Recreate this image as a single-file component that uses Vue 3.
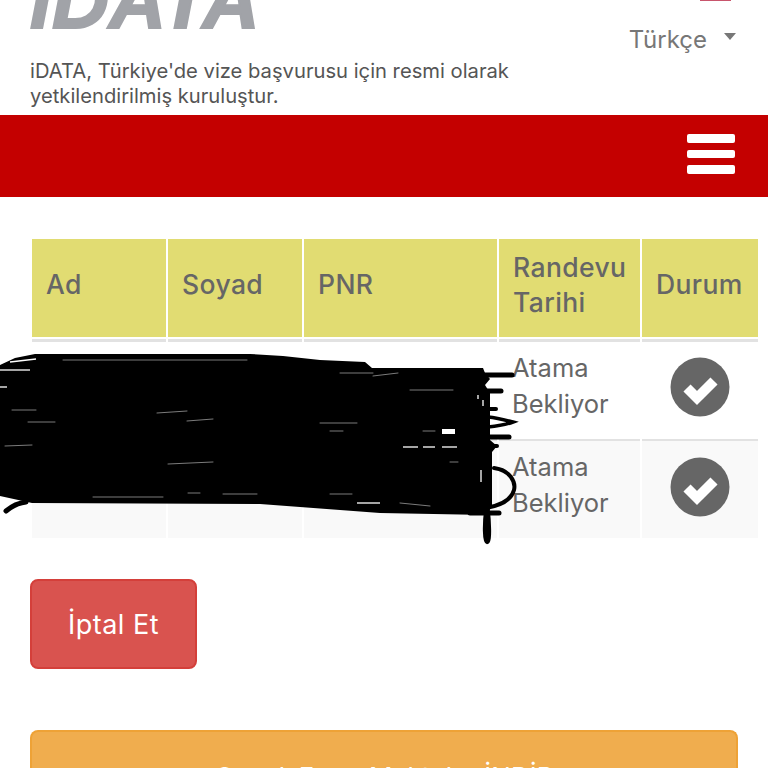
<script setup>
const heads = ['Ad', 'Soyad', 'PNR', 'Randevu Tarihi', 'Durum']
const rows = [{ id: 1, cls: 'odd' }, { id: 2, cls: 'even' }]
const slits = [
  'M63 360H247', 'M12 410H36', 'M28 422H55', 'M5 446L32 445', 'M168 464L213 462', 'M157 413L187 411', 'M187 421L213 419',
  'M93 497H163', 'M223 494H257', 'M188 493H200', 'M340 373H373', 'M373 376L398 373', 'M320 423H357', 'M330 431H343',
  'M423 431H435', 'M410 390H453', 'M450 462H458', 'M330 494H352', 'M400 503L430 506'
]
const bright = ['M403 447H418', 'M423 447H435', 'M442 447H457', 'M357 503H380', 'M0 370H30', 'M10 362L36 359', 'M0 387H7', 'M483 400V406', 'M478 395V399', 'M481 470V482']
</script>

<template>
  <div class="page">
    <header class="top">
      <div class="brand">
        <div class="logo">iDATA</div>
        <p class="tagline">iDATA, Türkiye'de vize başvurusu için resmi olarak yetkilendirilmiş kuruluştur.</p>
      </div>
      <div class="locale">
        <span class="flag"></span>
        <div class="lang"><span>Türkçe</span><i class="caret"></i></div>
      </div>
    </header>

    <nav class="bar">
      <button class="burger" aria-label="Menü"><span></span><span></span><span></span></button>
    </nav>

    <main class="content">
      <section class="table">
        <div v-for="h in heads" :key="h" class="head">{{ h }}</div>
        <template v-for="r in rows" :key="r.id">
          <div class="cell" :class="r.cls"></div>
          <div class="cell" :class="r.cls"></div>
          <div class="cell" :class="r.cls"></div>
          <div class="cell" :class="r.cls">Atama Bekliyor</div>
          <div class="cell icon" :class="r.cls">
            <svg width="60" height="60" viewBox="0 0 60 60">
              <circle cx="30" cy="30" r="29.5" fill="#666" />
              <path d="M17 31L27 41L44 24" fill="none" stroke="#fff" stroke-width="10" />
            </svg>
          </div>
        </template>
      </section>

      <button class="cancel">İptal Et</button>
      <button class="download">Onaylı Form Mektubu İNDİR</button>
    </main>

    <svg class="scribble" width="768" height="768" viewBox="0 0 768 768">
      <path fill="#000" d="M0 365L15 358L35 354H250L283 356L320 360L365 362L372 368H483L485 373L490 379L485 385L490 393V408L490 415L490 427V435L490 440L497 446L492 452V505L487 515L380 513L260 504L32 503L0 496Z" />
      <g fill="none" stroke="#000" stroke-linecap="round">
        <path stroke-width="5" d="M480 375H512" />
        <path stroke-width="5" d="M480 391H501" />
        <path stroke-width="4" d="M485 409H496" />
        <path stroke-width="3.5" d="M488 417C498 418 505 420 513 422C505 425 498 426 488 427" />
        <path stroke-width="5" d="M480 437H509" />
        <path stroke-width="4" d="M490 446H497" />
        <path stroke-width="4" d="M494 468C510 470 516 482 514 490C511 501 498 506 486 508" />
        <path stroke-width="4.5" d="M487 505C484 525 485 542 487 542C490 542 489 520 487 505" />
        <path stroke-width="5" d="M470 513H499" />
        <path stroke-width="5" d="M6 511C12 506 18 503 26 502" />
      </g>
      <g fill="none" stroke="#9a9a9a" stroke-width="0.8" stroke-linecap="round">
        <path v-for="d in slits" :key="d" :d="d" />
      </g>
      <g fill="none" stroke="#fff" stroke-width="1.3">
        <path v-for="d in bright" :key="d" :d="d" />
      </g>
      <path fill="#fff" d="M442 429H455V434H442Z" />
    </svg>
  </div>
</template>

<style scoped>
.page {
  position: relative;
  width: 768px;
  height: 768px;
  overflow: hidden;
  background: #fff;
  color: #666;
  font-family: Inter, "Noto Sans", sans-serif;
}
.top {
  display: flex;
  justify-content: space-between;
  height: 115px;
  padding: 0 32px 0 30px;
  box-sizing: border-box;
  overflow: hidden;
}
.brand {
  width: 500px;
}
.logo {
  margin-top: -28px;
  height: 57px;
  line-height: 57px;
  font-family: "Liberation Sans", sans-serif;
  font-style: italic;
  font-weight: 700;
  font-size: 79px;
  letter-spacing: 0;
  -webkit-text-stroke: 2px #a1a3a8;
  color: #a1a3a8;
  white-space: nowrap;
}
.tagline {
  margin: 29px 0 0;
  width: 500px;
  font-size: 20.2px;
  line-height: 25px;
  color: #555;
}
.locale {
  display: flex;
  flex-direction: column;
  align-items: flex-end;
}
.flag {
  display: block;
  width: 31px;
  height: 1px;
  margin-right: 5px;
  background: #c8556c;
}
.lang {
  display: flex;
  align-items: flex-start;
  gap: 17px;
  margin-top: 23px;
  font-size: 24px;
  line-height: 32px;
  color: #777;
}
.caret {
  width: 0;
  height: 0;
  margin-top: 9px;
  border-left: 6.5px solid transparent;
  border-right: 6.5px solid transparent;
  border-top: 7px solid #777;
}
.bar {
  display: flex;
  align-items: center;
  justify-content: flex-end;
  height: 82px;
  padding-right: 33px;
  background: #c40000;
}
.burger {
  display: flex;
  flex-direction: column;
  gap: 7px;
  width: 48px;
  margin-bottom: 4px;
  padding: 0;
  border: 0;
  background: none;
}
.burger span {
  height: 8.67px;
  border-radius: 2px;
  background: #fff;
}
.content {
  padding: 42px 30px 0;
}
.table {
  display: grid;
  grid-template-columns: 134px 134px 193px 141px 116px;
  column-gap: 2px;
  margin-left: 2px;
  width: 728px;
  font-size: 25.5px;
  line-height: 35.5px;
}
.head {
  display: flex;
  align-items: center;
  height: 98px;
  margin-bottom: 2px;
  padding: 0 0 6px 14px;
  box-sizing: border-box;
  background: #e1dc72;
  font-size: 26.5px;
  letter-spacing: 0.4px;
  font-weight: 500;
  color: #666;
}
.cell {
  height: 100px;
  padding: 8px 10px 0 13px;
  box-sizing: border-box;
  border-top: 3px solid #e2e2e2;
}
.even {
  height: 99px;
  border-top-width: 2px;
  background: #f9f9f9;
}
.icon {
  display: flex;
  justify-content: center;
  padding: 15px 0 0;
}
.even.icon {
  padding-top: 16px;
}
.cancel {
  display: block;
  width: 167px;
  height: 90px;
  margin-top: 41px;
  padding: 0;
  border: 2px solid #d43f3a;
  border-radius: 8px;
  background: #d9534f;
  color: #fff;
  font: 400 27px Inter, "Noto Sans", sans-serif;
  letter-spacing: 0.5px;
}
.download {
  display: block;
  width: 708px;
  height: 100px;
  margin-top: 61px;
  padding: 0 0 8px;
  border: 2px solid #eea236;
  border-bottom: 0;
  border-radius: 8px 8px 0 0;
  background: #f0ad4e;
  color: #fff;
  font: 400 26px/36px Inter, "Noto Sans", sans-serif;
  text-align: center;
}
.scribble {
  position: absolute;
  top: 0;
  left: 0;
  pointer-events: none;
}
</style>
